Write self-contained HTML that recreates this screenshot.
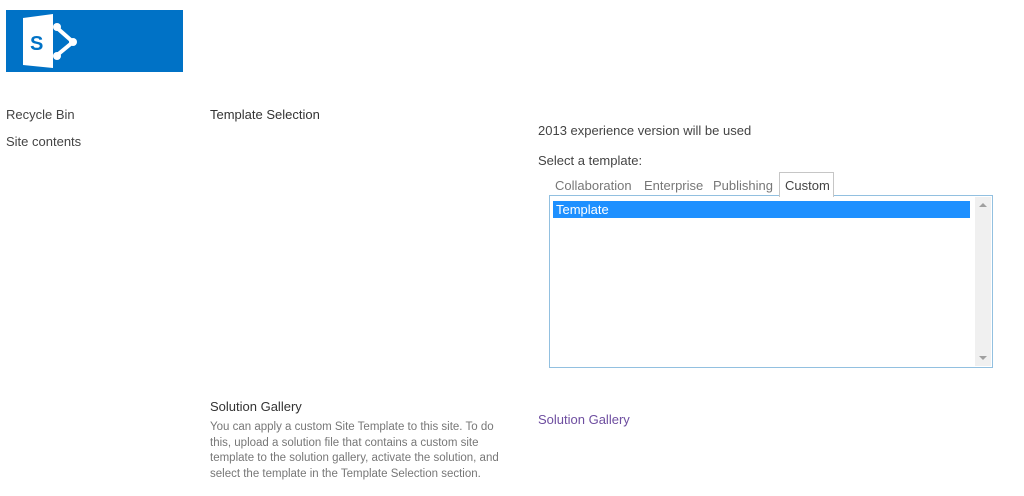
<!DOCTYPE html>
<html><head><style>
body{margin:0;width:1024px;height:496px;background:#fff;font-family:"Liberation Sans",sans-serif;color:#444;position:relative;overflow:hidden}
.a{position:absolute;white-space:nowrap}
.f13{font-size:13px}
</style></head><body>
<div class="a" style="left:6px;top:10px;width:177px;height:62px;background:#0072c6">
<svg width="177" height="62" viewBox="0 0 177 62">
<path d="M50,17 L67,32 L50,46" stroke="#fff" stroke-width="4" fill="none" stroke-linejoin="round"/>
<circle cx="51" cy="17" r="4" fill="#fff"/>
<circle cx="67" cy="32" r="4" fill="#fff"/>
<circle cx="51" cy="46" r="4" fill="#fff"/>
<polygon points="17,8 47,4 47,58 17,55" fill="#fff"/>
<text x="24" y="40" font-family="Liberation Sans" font-weight="bold" font-size="20" fill="#0072c6">S</text>
</svg></div>
<div class="a f13" style="left:6px;top:107px">Recycle Bin</div>
<div class="a f13" style="left:6px;top:134px">Site contents</div>
<div class="a f13" style="left:210px;top:107px;color:#333">Template Selection</div>
<div class="a f13" style="left:538px;top:123px">2013 experience version will be used</div>
<div class="a f13" style="left:538px;top:153px">Select a template:</div>
<div class="a f13" style="left:555px;top:178px;color:#777">Collaboration</div>
<div class="a f13" style="left:644px;top:178px;color:#777">Enterprise</div>
<div class="a f13" style="left:713px;top:178px;color:#777">Publishing</div>
<div class="a" style="left:779px;top:172px;width:53px;height:24px;border:1px solid #c6c6c6;border-bottom:none;background:#fff;z-index:2"></div>
<div class="a f13" style="left:785px;top:178px;color:#444;z-index:3">Custom</div>
<div class="a" style="left:549px;top:195px;width:444px;height:173px;border:1px solid #92c0e0;box-sizing:border-box"></div>
<div class="a f13" style="left:553px;top:201px;width:417px;height:17px;background:#1e90ff;color:#fff;line-height:17px;padding-left:3px;box-sizing:border-box">Template</div>
<div class="a" style="left:975px;top:197px;width:16px;height:169px;background:#f0f0f0"></div>
<div class="a" style="left:979px;top:203px;width:0;height:0;border-left:4px solid transparent;border-right:4px solid transparent;border-bottom:4px solid #a0a0a0"></div>
<div class="a" style="left:979px;top:356px;width:0;height:0;border-left:4px solid transparent;border-right:4px solid transparent;border-top:4px solid #a0a0a0"></div>
<div class="a f13" style="left:210px;top:399px;color:#333">Solution Gallery</div>
<div class="a" style="left:210px;top:420px;font-size:11.5px;line-height:15.5px;color:#777;white-space:normal;width:296px">You can apply a custom Site Template to this site. To do this, upload a solution file that contains a custom site template to the solution gallery, activate the solution, and select the template in the Template Selection section.</div>
<div class="a f13" style="left:538px;top:412px;color:#6e4ea0">Solution Gallery</div>
</body></html>
